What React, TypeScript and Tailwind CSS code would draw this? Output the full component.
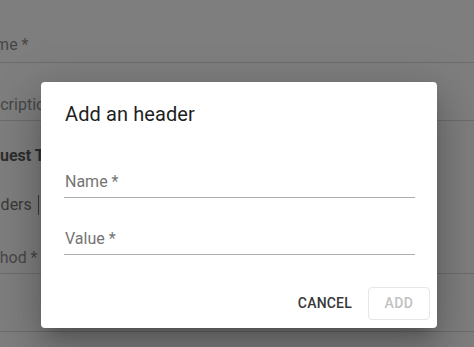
import React from "react";

export default function App() {
  return (
    <div
      className="relative w-[474px] h-[347px] overflow-hidden bg-[#7e7e7e]"
      style={{ fontFamily: "Roboto, 'Liberation Sans', sans-serif" }}
    >
      {/* dimmed page content behind the dialog */}
      <div className="flex flex-col text-[16px] leading-[24px] text-[#474747]">
        <div className="h-[63px] pt-[33px] border-b border-[#6c6c6c]">
          <div className="ml-[-25px]">Name *</div>
        </div>
        <div className="h-[58px] pt-[30px] border-b border-[#6c6c6c]">
          <div className="ml-[-27px]">Description</div>
        </div>
        <div className="h-[59px] pt-[23px]">
          <div className="ml-[-28px] font-bold text-[#2e2e2e]">Request Type</div>
        </div>
        <div className="h-[50px] pt-[13px] flex items-start">
          <div className="ml-[-28px] text-[#3a3a3a]">Headers</div>
          <div className="ml-[6px] mt-[2px] w-[1px] h-[20px] bg-[#3a3a3a]" />
        </div>
        <div className="h-[44px] pt-[16px] border-b border-[#6c6c6c]">
          <div className="ml-[-28px]">Method *</div>
        </div>
        <div className="h-[58px] pt-[31px] border-b border-[#6c6c6c]">
          <div className="ml-[-10px] text-[12px] leading-[16px] text-[#5a5a5a]">er</div>
        </div>
        <div className="flex-1 bg-[#838383]" />
      </div>

      {/* dialog */}
      <div className="absolute left-[41px] top-[82px] w-[396px] bg-white rounded-[4px] shadow-[0_11px_15px_-7px_rgba(0,0,0,0.2),0_24px_38px_3px_rgba(0,0,0,0.14),0_9px_46px_8px_rgba(0,0,0,0.12)] flex flex-col">
        <div className="px-6 py-4 text-[20px] leading-[32px] font-normal text-[#1f1f1f] tracking-[0.1px]">
          Add an header
        </div>
        <div className="pl-[23px] pr-[22px] pb-6 flex flex-col">
          <div className="mt-[4px] h-[48px] pt-[20px] pl-[1px] border-b border-[#adadad] box-border">
            <div className="text-[16px] leading-[23px] text-[#747474]">Name *</div>
          </div>
          <div className="mt-[9px] h-[48px] pt-[20px] pl-[1px] border-b border-[#adadad] box-border">
            <div className="text-[16px] leading-[23px] text-[#747474]">Value *</div>
          </div>
        </div>
        <div className="pt-2 pb-2 pl-2 pr-[7px] flex justify-end items-center gap-2">
          <button className="h-[33px] px-2 text-[14px] font-medium tracking-[0.2px] text-[#383838] rounded-[4px]">
            CANCEL
          </button>
          <button
            disabled
            className="h-[33px] w-[62px] px-[15px] text-[14px] font-medium tracking-[0.4px] text-[#c2c2c2] border border-[#e6e6e6] rounded-[4px]"
          >
            ADD
          </button>
        </div>
      </div>
    </div>
  );
}
